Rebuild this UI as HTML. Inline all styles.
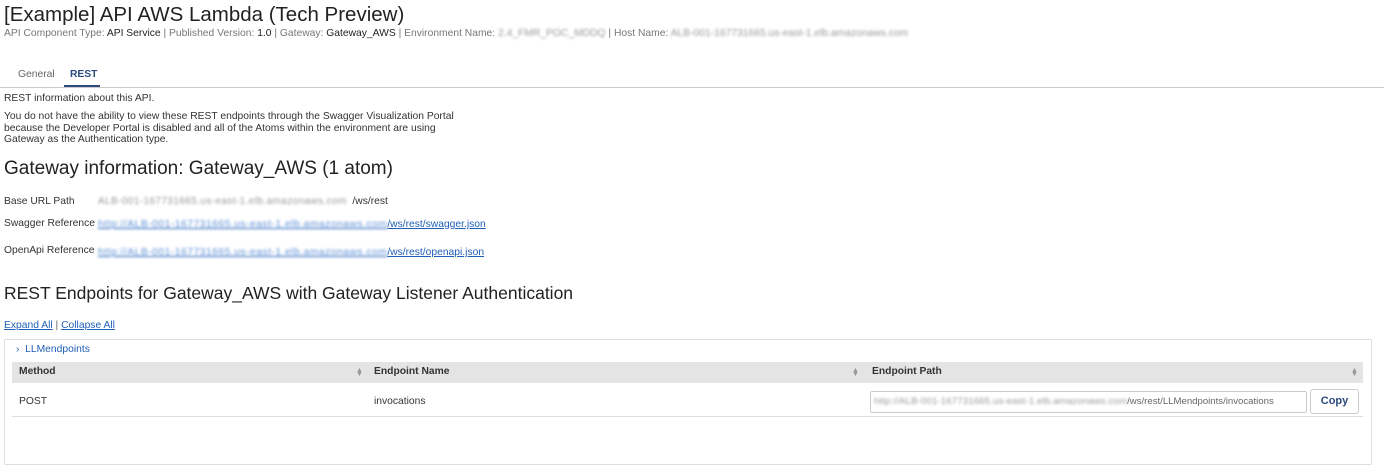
<!DOCTYPE html>
<html><head><meta charset="utf-8"><style>
*{margin:0;padding:0;box-sizing:border-box}
body{width:1384px;height:473px;background:#fff;font-family:"Liberation Sans",sans-serif;color:#333;position:relative;overflow:hidden}
.a{position:absolute;white-space:nowrap}
.s{font-size:10.3px}
.b{filter:blur(1.2px);color:#999}
.bl{filter:blur(1.2px);color:#5b8fd6}
a{color:#1f5fb8;text-decoration:underline}
.sort{position:absolute;font-size:7px;color:#999;line-height:4px}
</style></head><body>
<div class="a" style="left:4px;top:3px;font-size:20.5px;color:#222">[Example] API AWS Lambda (Tech Preview)</div>
<div class="a" style="left:4px;top:28px;font-size:10.3px;color:#777">API Component Type: <span style="color:#222">API Service</span> | Published Version: <span style="color:#222">1.0</span> | Gateway: <span style="color:#222">Gateway_AWS</span> | Environment Name: <span class="b">2.4_FMR_POC_MDDQ</span> | Host Name: <span class="b">ALB-001-167731665.us-east-1.elb.amazonaws.com</span></div>
<div class="a s" style="left:18px;top:69px;color:#666">General</div>
<div class="a s" style="left:70px;top:69px;color:#2c4a7c;font-weight:bold">REST</div>
<div class="a" style="left:64px;top:85px;width:36px;height:2px;background:#2c4a7c"></div>
<div class="a" style="left:0;top:87px;width:1384px;height:1px;background:#ccc"></div>
<div class="a s" style="left:4px;top:93px">REST information about this API.</div>
<div class="a s" style="left:4px;top:111px;line-height:11.5px">You do not have the ability to view these REST endpoints through the Swagger Visualization Portal<br>because the Developer Portal is disabled and all of the Atoms within the environment are using<br>Gateway as the Authentication type.</div>
<div class="a" style="left:4px;top:158px;font-size:19px;color:#222">Gateway information: Gateway_AWS (1 atom)</div>
<div class="a s" style="left:4px;top:196px">Base URL Path</div>
<div class="a s" style="left:98px;top:196px"><span class="b" style="font-size:10px;letter-spacing:.4px">ALB-001-167731665.us-east-1.elb.amazonaws.com</span> &nbsp;/ws/rest</div>
<div class="a s" style="left:4px;top:218px">Swagger Reference</div>
<div class="a s" style="left:98px;top:219px"><a><span class="bl" style="letter-spacing:.5px">http://ALB-001-167731665.us-east-1.elb.amazonaws.com</span>/ws/rest/swagger.json</a></div>
<div class="a s" style="left:4px;top:245px">OpenApi Reference</div>
<div class="a s" style="left:98px;top:247px"><a><span class="bl" style="letter-spacing:.5px">http://ALB-001-167731665.us-east-1.elb.amazonaws.com</span>/ws/rest/openapi.json</a></div>
<div class="a" style="left:4px;top:283px;font-size:17.5px;color:#222">REST Endpoints for Gateway_AWS with Gateway Listener Authentication</div>
<div class="a s" style="left:4px;top:320px"><a>Expand All</a> <span style="color:#666">|</span> <a>Collapse All</a></div>
<div class="a" style="left:4px;top:339px;width:1368px;height:126px;border:1px solid #ddd;border-radius:2px"></div>
<div class="a s" style="left:16px;top:344px;color:#1f5fb8">›&nbsp; LLMendpoints</div>
<div class="a" style="left:12px;top:362px;width:1351px;height:21px;background:#e4e4e4"></div>
<div class="a s" style="left:19px;top:366px;font-weight:bold;color:#333">Method</div>
<div class="a s" style="left:374px;top:366px;font-weight:bold;color:#333">Endpoint Name</div>
<div class="a s" style="left:872px;top:366px;font-weight:bold;color:#333">Endpoint Path</div>
<div class="sort" style="left:356px;top:369px">▲<br>▼</div>
<div class="sort" style="left:852px;top:369px">▲<br>▼</div>
<div class="sort" style="left:1351px;top:369px">▲<br>▼</div>
<div class="a s" style="left:19px;top:396px">POST</div>
<div class="a s" style="left:374px;top:396px">invocations</div>
<div class="a" style="left:870px;top:391px;width:437px;height:22px;border:1px solid #ccc;border-radius:2px"></div>
<div class="a" style="left:874px;top:396px;font-size:9.6px"><span class="b" style="letter-spacing:.15px">http://ALB-001-167731665.us-east-1.elb.amazonaws.com</span><span style="color:#666">/ws/rest/LLMendpoints/invocations</span></div>
<div class="a" style="left:1310px;top:389px;width:49px;height:25px;border:1px solid #ccc;border-radius:3px;font-size:11px;font-weight:bold;color:#2c4a7c;text-align:center;line-height:23px">Copy</div>
<div class="a" style="left:12px;top:416px;width:1351px;height:1px;background:#ddd"></div>
</body></html>
